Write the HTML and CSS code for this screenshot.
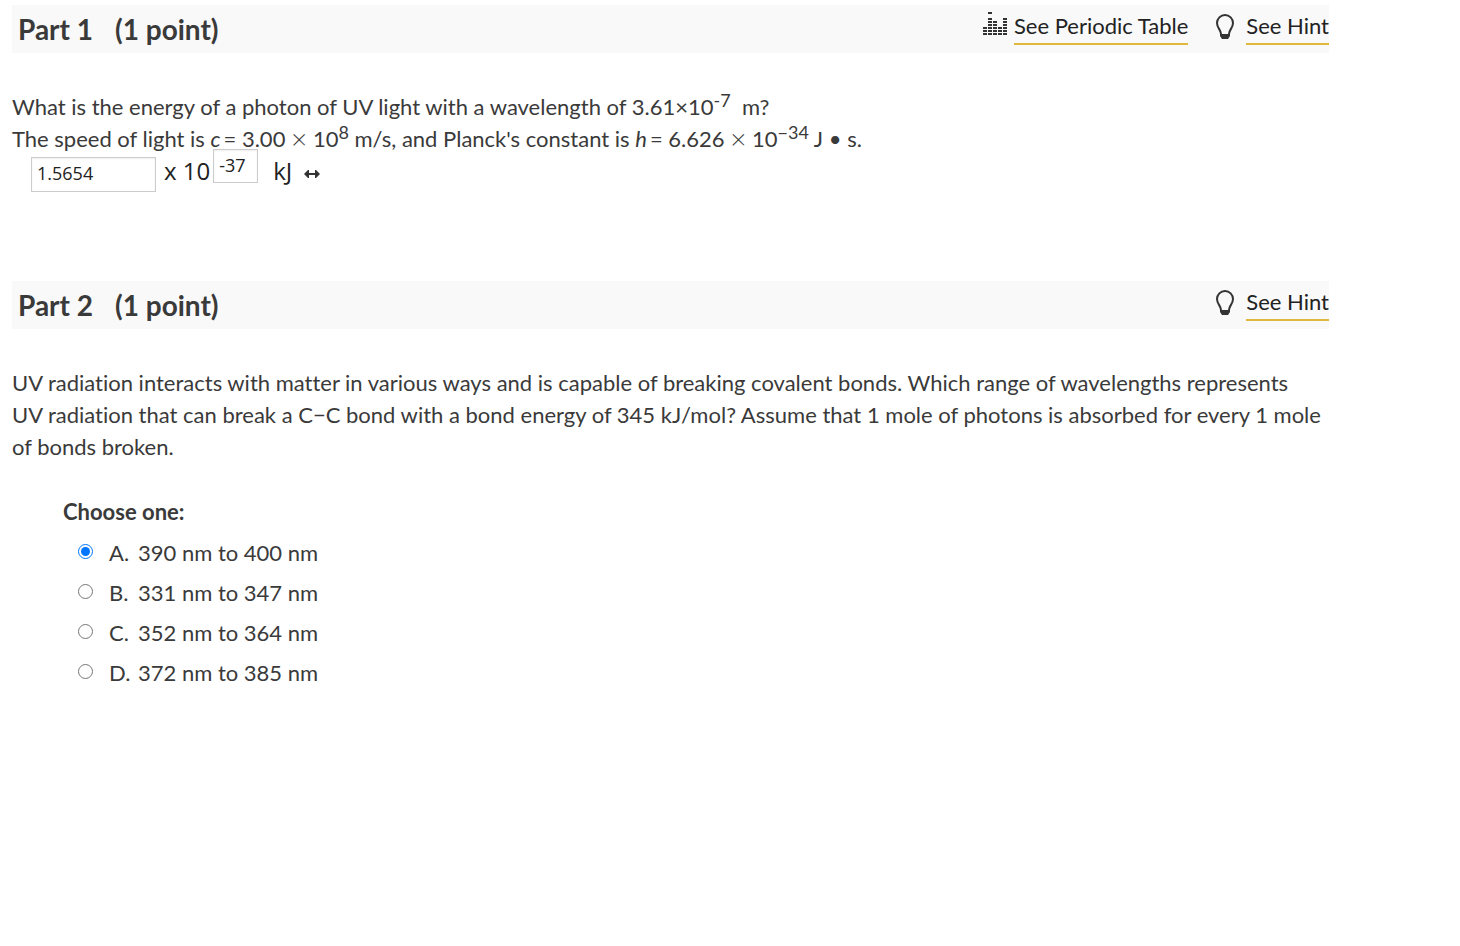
FILE: index.html
```html
<!DOCTYPE html>
<html lang="en">
<head>
<meta charset="utf-8">
<title>Photon energy</title>
<link rel="stylesheet" href="styles.css">
</head>
<body>
<main class="page">
  <section class="part">
    <header class="part-head">
      <h2 class="part-title"><span>Part 1</span><span>(1 point)</span></h2>
      <nav class="tools">
        <a class="tool" href="#table">
          <svg class="icon-table" viewBox="0 0 24 23" width="24" height="23" aria-hidden="true"><path d="M2 23v-9M7 23V5M12 23V8M17 23v-9M22 23V5"/><path d="M7 2V0"/></svg>
          <span class="tool-text">See Periodic Table</span>
        </a>
        <a class="tool tool-hint" href="#hint1">
          <svg class="icon-bulb" viewBox="0 0 20 26" width="20" height="26" aria-hidden="true"><path class="bulb-line" d="M6 20C6 16 2 14 2 9a8 8 0 0 1 16 0c0 5-4 7-4 11"/><path d="M5 20h10v2l-2 3H7l-2-3z"/></svg>
          <span class="tool-text">See Hint</span>
        </a>
      </nav>
    </header>
    <div class="question">
      <p>What is the energy of a photon of UV light with a wavelength of 3.61×10<sup>-7</sup>&nbsp; m?</p>
      <p>The speed of light is <i>c</i>= 3.00 <span class="multiply">×</span> 10<sup>8</sup> m/s, and Planck's constant is <i>h</i>= 6.626 <span class="multiply">×</span> 10<sup>−34</sup> J • s.</p>
    </div>
    <div class="answer">
      <input class="mantissa" type="text" value="1.5654" aria-label="Coefficient">
      <span class="times">x 10</span>
      <input class="exponent" type="text" value="-37" aria-label="Exponent">
      <span class="unit">kJ</span>
      <svg class="icon-arrow" viewBox="0 0 16 10" width="16" height="10" aria-hidden="true"><path d="M0 5l4-4h1v3h6V1h1l4 4-4 4h-1V6H5v3H4z"/></svg>
    </div>
  </section>
  <section class="part">
    <header class="part-head">
      <h2 class="part-title"><span>Part 2</span><span>(1 point)</span></h2>
      <nav class="tools">
        <a class="tool tool-hint" href="#hint2">
          <svg class="icon-bulb" viewBox="0 0 20 26" width="20" height="26" aria-hidden="true"><path class="bulb-line" d="M6 20C6 16 2 14 2 9a8 8 0 0 1 16 0c0 5-4 7-4 11"/><path d="M5 20h10v2l-2 3H7l-2-3z"/></svg>
          <span class="tool-text">See Hint</span>
        </a>
      </nav>
    </header>
    <div class="question">
      <p>UV radiation interacts with matter in various ways and is capable of breaking covalent bonds. Which range of wavelengths represents UV&nbsp;radiation that can break a C−C bond with a bond energy of 345 kJ/mol? Assume that 1 mole of photons is absorbed for every 1 mole of bonds broken.</p>
    </div>
    <fieldset class="choices">
      <legend>Choose one:</legend>
      <label class="choice"><input type="radio" name="range" checked><span class="letter">A.</span><span>390 nm to 400 nm</span></label>
      <label class="choice"><input type="radio" name="range"><span class="letter">B.</span><span>331 nm to 347 nm</span></label>
      <label class="choice"><input type="radio" name="range"><span class="letter">C.</span><span>352 nm to 364 nm</span></label>
      <label class="choice"><input type="radio" name="range"><span class="letter">D.</span><span>372 nm to 385 nm</span></label>
    </fieldset>
  </section>
</main>
</body>
</html>
```
FILE: styles.css
```css
* { box-sizing: border-box; }
body {
  margin: 0;
  background: #fff;
  color: #3a3a3a;
  font: 22px/32px Lato, sans-serif;
  font-variant-ligatures: none;
}
.page {
  margin: 5px 131px 0 12px;
  display: flex;
  flex-direction: column;
  gap: 89px;
}
.part-head {
  display: flex;
  justify-content: space-between;
  align-items: flex-start;
  min-height: 48px;
  padding-left: 6px;
  background: #f9f9f9;
}
.part-title {
  display: flex;
  gap: 22px;
  margin: 0;
  font-size: 28px;
  line-height: 48px;
  font-weight: 700;
}
.tools { display: flex; gap: 27px; padding-top: 5px; }
.tool { display: flex; gap: 7px; color: #222; text-decoration: none; }
.tool-hint { gap: 11px; }
.tool-text { padding-bottom: 1px; border-bottom: 2px solid #e0b83c; }
.tool svg { fill: #333; }
.icon-table { margin-top: 2px; }
.icon-table path { fill: none; stroke: #333; stroke-width: 4; stroke-dasharray: 2 1; }
.icon-bulb { margin-top: 4px; }
.icon-bulb .bulb-line { fill: none; stroke: #333; stroke-width: 2; }
.question { padding-top: 38px; }
.question p { margin: 0; }
.question i { margin-right: 3px; }
.multiply { font-size: 28px; font-weight: 300; line-height: 0; vertical-align: -2px; }
sup { font-size: 18px; line-height: 0; vertical-align: 8px; }
.answer { display: flex; align-items: flex-start; padding-left: 19px; color: #222; font: 24px/32px "Open Sans", sans-serif; }
.answer input {
  border: 1px solid #ccc;
  color: #222;
  font: 18px/24px "Open Sans", sans-serif;
  padding: 0 5px 3px;
  box-shadow: inset 0 1px 2px #eee;
}
.answer .mantissa { width: 125px; height: 35px; margin-top: 2px; }
.answer .exponent { width: 45px; height: 34px; margin-top: -6px; }
.times { margin: 0 3px 0 8px; }
.unit { margin: 0 12px 0 15px; }
.icon-arrow { align-self: center; fill: #333; }
.choices { border: 0; margin: 33px 0 0 51px; padding: 0; display: grid; }
.choices legend { padding: 0 0 5px; font-weight: 700; }
.choice { display: flex; line-height: 40px; }
.choice input { width: 15px; height: 15px; margin: 11px 16px 0 15px; }
.letter { width: 29px; }
```
